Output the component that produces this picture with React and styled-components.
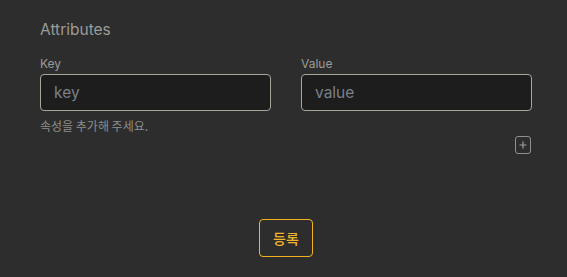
import React from "react";
import styled, { createGlobalStyle } from "styled-components";

const Global = createGlobalStyle`
  html, body { margin: 0; padding: 0; background: #2d2d2d; }
  body { font-family: Inter, "Noto Sans", "Noto Sans CJK KR", sans-serif; }
  * { box-sizing: border-box; }
`;

const Page = styled.div`
  width: 567px;
  height: 277px;
  background: #2d2d2d;
  padding: 19px 35px 0 40px;
  display: flex;
  flex-direction: column;
`;

const Title = styled.h3`
  margin: 0;
  font-size: 15.5px;
  font-weight: 400;
  line-height: 22px;
  color: #9b9b98;
`;

const Row = styled.div`
  display: grid;
  grid-template-columns: 1fr 1fr;
  column-gap: 30px;
  margin-top: 15px;
`;

const Field = styled.label`
  display: flex;
  flex-direction: column;
  gap: 3px;
`;

const Label = styled.span`
  font-size: 12px;
  line-height: 15px;
  color: #9b9b98;
`;

const Input = styled.input`
  height: 37px;
  width: 100%;
  background: #1d1d1d;
  border: 1px solid #a9a699;
  border-radius: 4px;
  padding: 0 13px;
  font-family: inherit;
  font-size: 15.5px;
  color: #d0d0d0;
  outline: none;
  &::placeholder { color: #7b8088; }
`;

const Hint = styled.p`
  margin: 7px 0 0;
  font-size: 12px;
  line-height: 15px;
  color: #8e8e8b;
  font-family: "Noto Sans CJK KR", sans-serif;
`;

const AddRow = styled.div`
  display: flex;
  justify-content: flex-end;
  margin-top: 3px;
  padding-right: 1px;
`;

const AddButton = styled.button`
  width: 16px;
  height: 18px;
  padding: 0;
  border: 1px solid #8f8f8c;
  border-radius: 3px;
  background: transparent;
  display: flex;
  align-items: center;
  justify-content: center;
  cursor: pointer;
`;

const Footer = styled.div`
  display: flex;
  justify-content: center;
  margin-top: 65px;
`;

const Submit = styled.button`
  width: 54px;
  height: 38px;
  border: 1px solid #f2b41e;
  border-radius: 4px;
  background: transparent;
  color: #f0b52c;
  font-family: "Noto Sans CJK KR", sans-serif;
  font-size: 14px;
  font-weight: 500;
  cursor: pointer;
  padding: 0;
`;

export default function App() {
  return (
    <>
      <Global />
      <Page>
        <Title>Attributes</Title>
        <Row>
          <Field>
            <Label>Key</Label>
            <Input placeholder="key" />
          </Field>
          <Field>
            <Label>Value</Label>
            <Input placeholder="value" />
          </Field>
        </Row>
        <Hint>속성을 추가해 주세요.</Hint>
        <AddRow>
          <AddButton aria-label="add">
            <svg width="8" height="8" viewBox="0 0 8 8">
              <path d="M4 0.5V7.5M0.5 4H7.5" stroke="#a0a09c" strokeWidth="1.2" />
            </svg>
          </AddButton>
        </AddRow>
        <Footer>
          <Submit>등록</Submit>
        </Footer>
      </Page>
    </>
  );
}
